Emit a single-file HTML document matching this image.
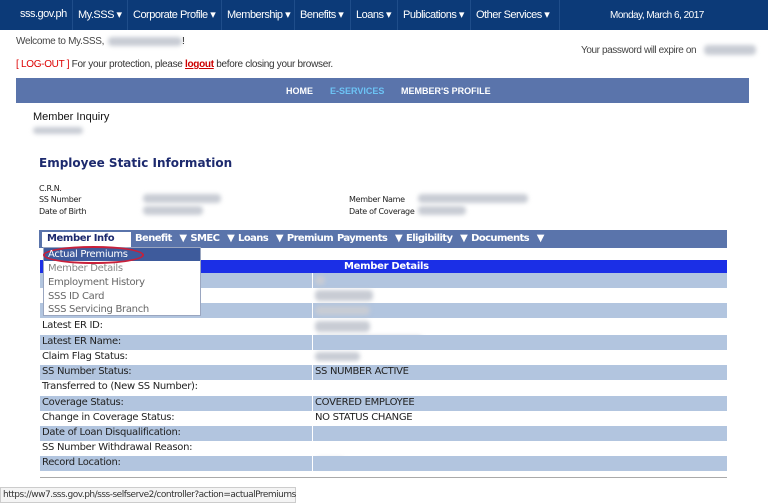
<!DOCTYPE html><html><head><style>
*{margin:0;padding:0;box-sizing:border-box}
body{width:768px;height:503px;position:relative;overflow:hidden;background:#fff;font-family:"Liberation Sans",sans-serif;color:#222}
.a{position:absolute;white-space:nowrap}
#top{position:absolute;left:0;top:0;width:768px;height:30px;background:#0c3a78}
#top .a{color:#fff;font-size:11px;top:8px;letter-spacing:-0.5px}
.sep{position:absolute;top:0;width:1px;height:30px;background:#1f4d8a}
.v{font-family:"DejaVu Sans",sans-serif;font-size:10px;letter-spacing:-0.3px}
.row{position:absolute;left:40px;width:687px;height:15px}
.row.b{background:#b2c5df}
.row .l{position:absolute;left:2px;top:1px}
.row .r{position:absolute;left:275px;top:1px}
.row .d{position:absolute;left:272px;top:0;width:1px;height:15px;background:#fff}
.blur{position:absolute;background:#c8ccd4;border-radius:4px;filter:blur(2px)}
</style></head><body>
<div id="top">
<span class="a" style="left:20px">sss.gov.ph</span><div class="sep" style="left:72px"></div>
<span class="a" style="left:78px">My.SSS ▾</span><div class="sep" style="left:127px"></div>
<span class="a" style="left:133px">Corporate Profile ▾</span><div class="sep" style="left:221px"></div>
<span class="a" style="left:227px">Membership ▾</span><div class="sep" style="left:294px"></div>
<span class="a" style="left:300px">Benefits ▾</span><div class="sep" style="left:350px"></div>
<span class="a" style="left:356px">Loans ▾</span><div class="sep" style="left:397px"></div>
<span class="a" style="left:403px">Publications ▾</span><div class="sep" style="left:470px"></div>
<span class="a" style="left:476px">Other Services ▾</span><div class="sep" style="left:559px"></div>
<span class="a" style="left:610px;font-size:10px;top:10px">Monday, March 6, 2017</span>
</div>
<span class="a" style="left:16px;top:36px;font-size:10px;color:#444;letter-spacing:-0.3px">Welcome to My.SSS,</span>
<div class="blur" style="left:108px;top:37px;width:74px;height:9px"></div>
<span class="a" style="left:182px;top:36px;font-size:10px">!</span>
<span class="a" style="left:581px;top:45px;font-size:10px;color:#444;letter-spacing:-0.4px">Your password will expire on</span>
<div class="blur" style="left:704px;top:45px;width:52px;height:10px"></div>
<span class="a" style="left:16px;top:59px;font-size:10px;color:#333;letter-spacing:-0.3px"><span style="color:#d00">[ LOG-OUT ]</span> For your protection, please <u style="color:#c00;font-weight:bold">logout</u> before closing your browser.</span>
<div class="a" style="left:16px;top:78px;width:733px;height:25px;background:#5a74ab"></div>
<span class="a" style="left:286px;top:86px;font-size:9px;font-weight:bold;color:#fff">HOME</span>
<span class="a" style="left:330px;top:86px;font-size:9px;font-weight:bold;color:#6cc3f5">E-SERVICES</span>
<span class="a" style="left:401px;top:86px;font-size:9px;font-weight:bold;color:#fff">MEMBER'S PROFILE</span>
<span class="a" style="left:33px;top:111px;font-size:11px;color:#111">Member Inquiry</span>
<div class="blur" style="left:33px;top:127px;width:50px;height:7px"></div>
<span class="a" style="left:39px;top:156px;font-size:12px;font-weight:bold;color:#1d2a6e;font-family:'DejaVu Sans',sans-serif">Employee Static Information</span>
<span class="a v" style="left:39px;top:184px;font-size:8px">C.R.N.</span>
<span class="a v" style="left:39px;top:195px;font-size:8px">SS Number</span>
<span class="a v" style="left:39px;top:207px;font-size:8px">Date of Birth</span>
<div class="blur" style="left:143px;top:194px;width:78px;height:9px"></div>
<div class="blur" style="left:143px;top:206px;width:60px;height:9px"></div>
<span class="a v" style="left:349px;top:195px;font-size:8px">Member Name</span>
<span class="a v" style="left:349px;top:207px;font-size:8px">Date of Coverage</span>
<div class="blur" style="left:418px;top:194px;width:110px;height:9px"></div>
<div class="blur" style="left:418px;top:206px;width:48px;height:9px"></div>
<div class="a" style="left:39px;top:230px;width:688px;height:18px;background:#5a74ab"></div>
<div class="a" style="left:42px;top:232px;width:89px;height:15px;background:#fff"></div>
<span class="a v" style="left:47px;top:233px;font-weight:bold;color:#1d2a6e;font-size:10px;letter-spacing:-0.4px">Member Info</span>
<span class="a v" style="left:135px;top:233px;font-weight:bold;color:#fff;font-size:10px;letter-spacing:-0.6px;word-spacing:1px">Benefit &nbsp;▼ SMEC &nbsp;▼ Loans &nbsp;▼ Premium Payments &nbsp;▼ Eligibility &nbsp;▼ Documents &nbsp;▼</span>
<div class="a" style="left:40px;top:260px;width:687px;height:13px;background:#1b2fe6"></div>
<span class="a v" style="left:344px;top:261px;font-weight:bold;color:#fff">Member Details</span>
<div class="row b" style="top:273px"><div class="d"></div></div>
<div class="row" style="top:288px"></div>
<div class="row b" style="top:303px"><div class="d"></div></div>
<div class="blur" style="left:315px;top:276px;width:10px;height:9px"></div>
<div class="blur" style="left:315px;top:290px;width:58px;height:11px"></div>
<div class="blur" style="left:315px;top:306px;width:55px;height:9px"></div>
<div class="blur" style="left:315px;top:321px;width:55px;height:11px"></div>
<div class="blur" style="left:315px;top:336px;width:108px;height:9px"></div>
<div class="blur" style="left:315px;top:352px;width:45px;height:9px"></div>
<div class="blur" style="left:315px;top:458px;width:30px;height:9px"></div>
<div class="row" style="top:319px"><span class="l v">Latest ER ID:</span></div>
<div class="row b" style="top:335px"><div class="d"></div><span class="l v">Latest ER Name:</span></div>
<div class="row" style="top:350px"><span class="l v">Claim Flag Status:</span></div>
<div class="row b" style="top:365px"><div class="d"></div><span class="l v">SS Number Status:</span><span class="r v">SS NUMBER ACTIVE</span></div>
<div class="row" style="top:380px"><span class="l v">Transferred to (New SS Number):</span></div>
<div class="row b" style="top:396px"><div class="d"></div><span class="l v">Coverage Status:</span><span class="r v">COVERED EMPLOYEE</span></div>
<div class="row" style="top:411px"><span class="l v">Change in Coverage Status:</span><span class="r v">NO STATUS CHANGE</span></div>
<div class="row b" style="top:426px"><div class="d"></div><span class="l v">Date of Loan Disqualification:</span></div>
<div class="row" style="top:441px"><span class="l v">SS Number Withdrawal Reason:</span></div>
<div class="row b" style="top:456px"><div class="d"></div><span class="l v">Record Location:</span></div>
<div class="a" style="left:40px;top:477px;width:687px;height:1px;background:#aaa"></div>
<div class="a" style="left:43px;top:247px;width:158px;height:69px;background:#fff;border:1px solid #9aa6c0"></div>
<div class="a" style="left:44px;top:248px;width:156px;height:13px;background:#3e5b9c"></div>
<div class="a" style="left:43px;top:246px;width:101px;height:18px;border:2px solid #c8203a;border-radius:50%"></div>
<span class="a v" style="left:48px;top:249px;color:#fff">Actual Premiums</span>
<span class="a v" style="left:48px;top:263px;color:#888">Member Details</span>
<span class="a v" style="left:48px;top:277px;color:#666">Employment History</span>
<span class="a v" style="left:48px;top:291px;color:#666">SSS ID Card</span>
<span class="a v" style="left:48px;top:304px;color:#666">SSS Servicing Branch</span>
<div class="a" style="left:0;top:487px;width:296px;height:16px;background:#f4f4f4;border:1px solid #ccc"></div>
<span class="a" style="left:3px;top:490px;font-size:9px;color:#333;font-family:'DejaVu Sans',sans-serif;letter-spacing:-0.5px">https://ww7.sss.gov.ph/sss-selfserve2/controller?action=actualPremiums</span>
</body></html>
